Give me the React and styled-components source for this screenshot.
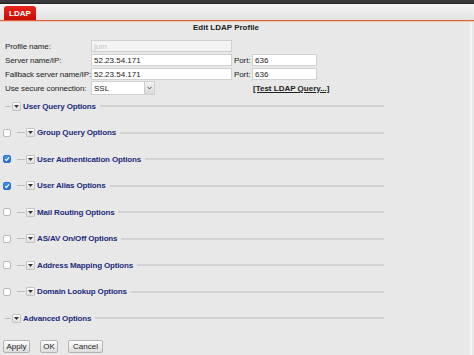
import React from "react";
import styled, { createGlobalStyle } from "styled-components";

const Global = createGlobalStyle`
  html, body { margin: 0; padding: 0; background: #e8e8e8; }
  body { font-family: "Liberation Sans", Arial, sans-serif; color: #222; }
  * { box-sizing: border-box; }
`;

const Page = styled.div`
  width: 474px;
  height: 355px;
  display: flex;
  flex-direction: column;
  overflow: hidden;
  background: #e8e8e8;
`;

const TopBar = styled.div`
  height: 4px;
  background: #3a3a3a;
  border-bottom: 1px solid #222;
`;

const Header = styled.div`
  height: 16px;
  display: flex;
  align-items: flex-end;
  padding-left: 4px;
  background: linear-gradient(#f6f6f6, #e2e2e2);
`;

const Tab = styled.div`
  width: 32px;
  height: 14px;
  background: linear-gradient(#e8261c, #c80c06);
  color: #fff;
  font-weight: bold;
  font-size: 8px;
  display: flex;
  align-items: center;
  justify-content: center;
  border-radius: 3px 3px 0 0;
`;

const Rule = styled.div`
  height: 2px;
  background: #d8673e;
  border-bottom: 1px solid #f0c8b8;
`;

const Main = styled.div`
  flex: 1;
  display: flex;
  flex-direction: column;
  border-right: 2px solid #f4f4f4;
  margin-right: 2px;
`;

const Title = styled.div`
  text-align: center;
  font-weight: bold;
  font-size: 8px;
  height: 14px;
  line-height: 12px;
  padding-right: 18px;
`;

const Form = styled.div`
  display: grid;
  grid-template-columns: 86px 141px 20px 65px;
  padding-left: 5px;
  margin-top: 3px;
`;

const Label = styled.div`
  font-size: 8px;
  height: 14px;
  display: flex;
  align-items: center;
  white-space: nowrap;
  letter-spacing: -0.1px;
  padding-left: ${(p) => p.$pad || 0}px;
`;

const Cell = styled.div`
  height: 14px;
  display: flex;
  align-items: center;
  white-space: nowrap;
`;

const Input = styled.div`
  width: 100%;
  height: 12px;
  background: ${(p) => (p.$disabled ? "#f4f4f4" : "#fff")};
  border: 1px solid #d0d0d0;
  font-size: 8px;
  color: ${(p) => (p.$disabled ? "#c4c4c4" : "#222")};
  padding-left: 2px;
  display: flex;
  align-items: center;
`;

const Select = styled.div`
  width: 64px;
  height: 14px;
  background: #fff;
  border: 1px solid #d0d0d0;
  font-size: 8px;
  display: flex;
  align-items: center;
  justify-content: space-between;
  padding-left: 2px;
`;

const SelectBtn = styled.div`
  width: 10px;
  height: 12px;
  background: linear-gradient(#f4f4f4, #d8d8d8);
  border-left: 1px solid #ccc;
  display: flex;
  align-items: center;
  justify-content: center;
`;

const TestLink = styled.span`
  font-size: 8px;
  font-weight: bold;
  text-decoration: underline;
  color: #222;
  white-space: nowrap;
  padding-left: 1px;
`;

const Sections = styled.div`
  display: flex;
  flex-direction: column;
  width: 384px;
  margin-top: -2px;
`;

const Row = styled.div`
  height: 26.5px;
  display: flex;
  align-items: center;
  padding-left: ${(p) => (p.$check ? 3 : 5)}px;
`;

const Box = styled.span`
  width: 8px;
  height: 8px;
  border-radius: 2px;
  border: 1px solid ${(p) => (p.$on ? "#2a6fd8" : "#bbb")};
  background: ${(p) => (p.$on ? "linear-gradient(#4a95f0, #2068d8)" : "#fff")};
  display: flex;
  align-items: center;
  justify-content: center;
  margin-right: 6px;
  flex: none;
`;

const Dash = styled.span`
  width: ${(p) => p.$w}px;
  height: 1px;
  background: #bdbdbd;
  margin-right: 1px;
  flex: none;
`;

const Toggle = styled.span`
  width: 9px;
  height: 9px;
  border: 1px solid #c4c4c4;
  border-radius: 1px;
  background: linear-gradient(#ffffff, #dedede);
  display: flex;
  align-items: center;
  justify-content: center;
  margin-right: 2px;
  flex: none;
`;

const Caption = styled.span`
  font-size: 8px;
  font-weight: bold;
  color: #1c2c7c;
  white-space: nowrap;
  letter-spacing: -0.15px;
  margin-right: 4px;
`;

const Line = styled.span`
  flex: 1;
  height: 2px;
  background: #d2d2d2;
`;

const Buttons = styled.div`
  display: flex;
  gap: 10px;
  padding-left: 3px;
  margin-top: 8px;
`;

const Button = styled.div`
  height: 13px;
  width: ${(p) => p.$w}px;
  border: 1px solid #b4b4b4;
  border-radius: 2px;
  background: linear-gradient(#fefefe, #dcdcdc);
  font-size: 8px;
  display: flex;
  align-items: center;
  justify-content: center;
`;

const Tri = () => (
  <svg width="5" height="3" viewBox="0 0 5 3">
    <path d="M0 0h5L2.5 3z" fill="#333" />
  </svg>
);

const Check = () => (
  <svg width="6" height="6" viewBox="0 0 6 6">
    <path d="M1 3.2l1.4 1.4L5 1.4" stroke="#fff" strokeWidth="1.2" fill="none" />
  </svg>
);

const sections = [
  { t: "User Query Options", c: null },
  { t: "Group Query Options", c: false },
  { t: "User Authentication Options", c: true },
  { t: "User Alias Options", c: true },
  { t: "Mail Routing Options", c: false },
  { t: "AS/AV On/Off Options", c: false },
  { t: "Address Mapping Options", c: false },
  { t: "Domain Lookup Options", c: false },
  { t: "Advanced Options", c: null },
];

export default function App() {
  return (
    <Page>
      <Global />
      <TopBar />
      <Header>
        <Tab>LDAP</Tab>
      </Header>
      <Rule />
      <Main>
        <Title>Edit LDAP Profile</Title>
        <Form>
          <Label>Profile name:</Label>
          <Cell><Input $disabled>jum</Input></Cell>
          <Cell />
          <Cell />
          <Label>Server name/IP:</Label>
          <Cell><Input>52.23.54.171</Input></Cell>
          <Label $pad={2}>Port:</Label>
          <Cell><Input>636</Input></Cell>
          <Label>Fallback server name/IP:</Label>
          <Cell><Input>52.23.54.171</Input></Cell>
          <Label $pad={2}>Port:</Label>
          <Cell><Input>636</Input></Cell>
          <Label>Use secure connection:</Label>
          <Cell>
            <Select>
              SSL
              <SelectBtn>
                <svg width="5" height="4" viewBox="0 0 5 4">
                  <path d="M0.5 0.8L2.5 3L4.5 0.8" stroke="#555" strokeWidth="1" fill="none" />
                </svg>
              </SelectBtn>
            </Select>
          </Cell>
          <Cell />
          <Cell><TestLink>[Test LDAP Query...]</TestLink></Cell>
        </Form>
        <Sections>
          {sections.map((s) => (
            <Row key={s.t} $check={s.c !== null}>
              {s.c !== null && <Box $on={s.c}>{s.c && <Check />}</Box>}
              <Dash $w={s.c !== null ? 8 : 6} />
              <Toggle><Tri /></Toggle>
              <Caption>{s.t}</Caption>
              <Line />
            </Row>
          ))}
        </Sections>
        <Buttons>
          <Button $w={27}>Apply</Button>
          <Button $w={18}>OK</Button>
          <Button $w={35}>Cancel</Button>
        </Buttons>
      </Main>
    </Page>
  );
}
